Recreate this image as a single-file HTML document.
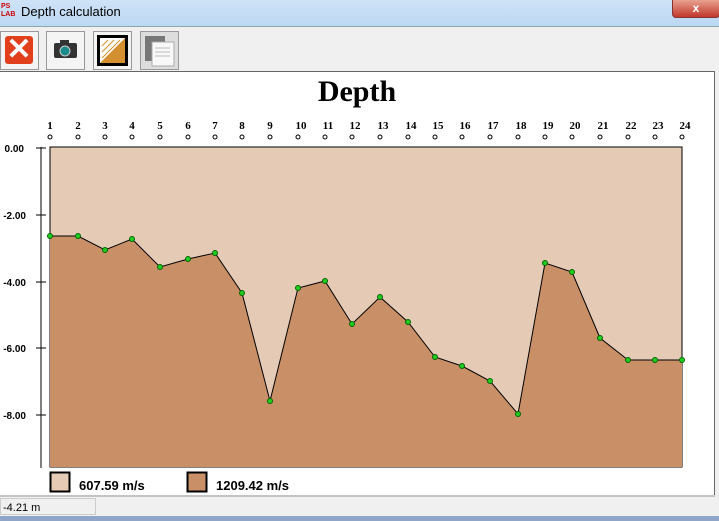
<!DOCTYPE html>
<html><head><style>
body{margin:0;width:719px;height:521px;overflow:hidden;background:#f0f0f0;font-family:"Liberation Sans",sans-serif;position:relative}
.t{position:absolute;left:0;top:0;width:719px;height:26px;background:linear-gradient(#cfe3f7,#bcd8f3);border-bottom:1px solid #8aa}
.t span{position:absolute;left:21px;top:4px;font-size:13px;color:#000}
.btn{position:absolute;top:31px;width:37px;height:37px;border:1px solid #999;background:#f4f4f4}
.main{position:absolute;left:0;top:71px;width:714px;height:423px;background:#fff;border-top:1px solid #666;border-right:1px solid #666}
</style></head><body>
<div class="t"><div style="position:absolute;left:1px;top:3px;width:15px;height:17px;font-size:7px;line-height:8px;color:#c00;font-weight:bold">PS<br>LAB</div><span>Depth calculation</span>
<div style="position:absolute;left:672px;top:0;width:46px;height:17px;background:linear-gradient(#e8a090,#c0392b);border:1px solid #833;border-top:none;border-radius:0 0 4px 4px;color:#fff;text-align:center;font-weight:bold;font-size:12px;line-height:16px">x</div></div>
<div class="btn" style="left:0"><div style="position:absolute;left:4px;top:4px;width:28px;height:28px;background:#e2401c;border-radius:3px;color:#fff;font-size:30px;line-height:28px;text-align:center;font-weight:bold">✕</div></div>
<div class="btn" style="left:46px"><svg width="37" height="37"><rect x="7" y="11" width="23" height="15" rx="2" fill="#333"/><rect x="13" y="8" width="9" height="4" fill="#333"/><circle cx="18" cy="19" r="5" fill="#1a8a8a" stroke="#ccc"/></svg></div>
<div class="btn" style="left:93px"><svg width="37" height="37"><rect x="3" y="3" width="31" height="31" fill="#000"/><rect x="6" y="6" width="25" height="25" fill="#fff"/><polygon points="31,6 31,31 6,31" fill="#d49030"/><path d="M8 14L14 8M8 20L20 8M8 26L26 8" stroke="#d49030" stroke-width="1"/></svg></div>
<div class="btn" style="left:140px;background:#ddd"><svg width="37" height="37"><rect x="4" y="4" width="20" height="25" fill="#777"/><rect x="11" y="10" width="22" height="24" fill="#f8f8f8" stroke="#aaa"/><path d="M14 16h15M14 20h15M14 24h15" stroke="#bbb"/></svg></div>
<div class="main"></div>
<svg style="position:absolute;left:0;top:0" width="719" height="521" font-family="Liberation Serif" font-weight="bold">
<text x="357" y="101" font-size="30" text-anchor="middle">Depth</text>
<g font-size="11" text-anchor="middle">
<text x="50" y="129">1</text><text x="78" y="129">2</text><text x="105" y="129">3</text><text x="132" y="129">4</text><text x="160" y="129">5</text><text x="188" y="129">6</text><text x="215" y="129">7</text><text x="242" y="129">8</text><text x="270" y="129">9</text><text x="301" y="129">10</text><text x="328" y="129">11</text><text x="355" y="129">12</text><text x="383" y="129">13</text><text x="411" y="129">14</text><text x="438" y="129">15</text><text x="465" y="129">16</text><text x="493" y="129">17</text><text x="521" y="129">18</text><text x="548" y="129">19</text><text x="575" y="129">20</text><text x="603" y="129">21</text><text x="631" y="129">22</text><text x="658" y="129">23</text><text x="685" y="129">24</text></g>
<g fill="none" stroke="#000"><circle cx="50" cy="137" r="2"/><circle cx="78" cy="137" r="2"/><circle cx="105" cy="137" r="2"/><circle cx="132" cy="137" r="2"/><circle cx="160" cy="137" r="2"/><circle cx="188" cy="137" r="2"/><circle cx="215" cy="137" r="2"/><circle cx="242" cy="137" r="2"/><circle cx="270" cy="137" r="2"/><circle cx="298" cy="137" r="2"/><circle cx="325" cy="137" r="2"/><circle cx="352" cy="137" r="2"/><circle cx="380" cy="137" r="2"/><circle cx="408" cy="137" r="2"/><circle cx="435" cy="137" r="2"/><circle cx="462" cy="137" r="2"/><circle cx="490" cy="137" r="2"/><circle cx="518" cy="137" r="2"/><circle cx="545" cy="137" r="2"/><circle cx="572" cy="137" r="2"/><circle cx="600" cy="137" r="2"/><circle cx="628" cy="137" r="2"/><circle cx="655" cy="137" r="2"/><circle cx="682" cy="137" r="2"/></g>
<rect x="50" y="147" width="632" height="320" fill="#e5cbb5" stroke="#000"/>
<polygon points="50,236 78,236 105,250 132,239 160,267 188,259 215,253 242,293 270,401 298,288 325,281 352,324 380,297 408,322 435,357 462,366 490,381 518,414 545,263 572,272 600,338 628,360 655,360 682,360 682,467 50,467" fill="#c98f66"/>
<polyline points="50,236 78,236 105,250 132,239 160,267 188,259 215,253 242,293 270,401 298,288 325,281 352,324 380,297 408,322 435,357 462,366 490,381 518,414 545,263 572,272 600,338 628,360 655,360 682,360" fill="none" stroke="#000"/>
<g fill="#2c2" stroke="#060"><circle cx="50" cy="236" r="2.5"/><circle cx="78" cy="236" r="2.5"/><circle cx="105" cy="250" r="2.5"/><circle cx="132" cy="239" r="2.5"/><circle cx="160" cy="267" r="2.5"/><circle cx="188" cy="259" r="2.5"/><circle cx="215" cy="253" r="2.5"/><circle cx="242" cy="293" r="2.5"/><circle cx="270" cy="401" r="2.5"/><circle cx="298" cy="288" r="2.5"/><circle cx="325" cy="281" r="2.5"/><circle cx="352" cy="324" r="2.5"/><circle cx="380" cy="297" r="2.5"/><circle cx="408" cy="322" r="2.5"/><circle cx="435" cy="357" r="2.5"/><circle cx="462" cy="366" r="2.5"/><circle cx="490" cy="381" r="2.5"/><circle cx="518" cy="414" r="2.5"/><circle cx="545" cy="263" r="2.5"/><circle cx="572" cy="272" r="2.5"/><circle cx="600" cy="338" r="2.5"/><circle cx="628" cy="360" r="2.5"/><circle cx="655" cy="360" r="2.5"/><circle cx="682" cy="360" r="2.5"/></g>
<path d="M41 147V468M36 148h10M36 215h10M36 282h10M36 348h10M36 415h10" stroke="#000"/>
<g font-family="Liberation Sans" font-size="10" font-weight="bold" text-anchor="end"><text x="24" y="152">0.00</text><text x="26" y="219">-2.00</text><text x="26" y="286">-4.00</text><text x="26" y="352">-6.00</text><text x="26" y="419">-8.00</text></g>
<rect x="50.5" y="472.5" width="19" height="19" fill="#e5cbb5" stroke="#000" stroke-width="2"/>
<rect x="187.5" y="472.5" width="19" height="19" fill="#c98f66" stroke="#000" stroke-width="2"/>
<g font-family="Liberation Sans" font-size="13" font-weight="bold"><text x="79" y="490">607.59 m/s</text><text x="216" y="490">1209.42 m/s</text></g>
<line x1="0" y1="496" x2="715" y2="496" stroke="#999"/>
<rect x="0.5" y="498.5" width="95" height="16" fill="#f0f0f0" stroke="#ccc"/>
<text x="3" y="511" font-family="Liberation Sans" font-size="11" font-weight="normal">-4.21 m</text>
<rect x="0" y="516" width="719" height="5" fill="#8fa6c8"/>
</svg>
</body></html>
